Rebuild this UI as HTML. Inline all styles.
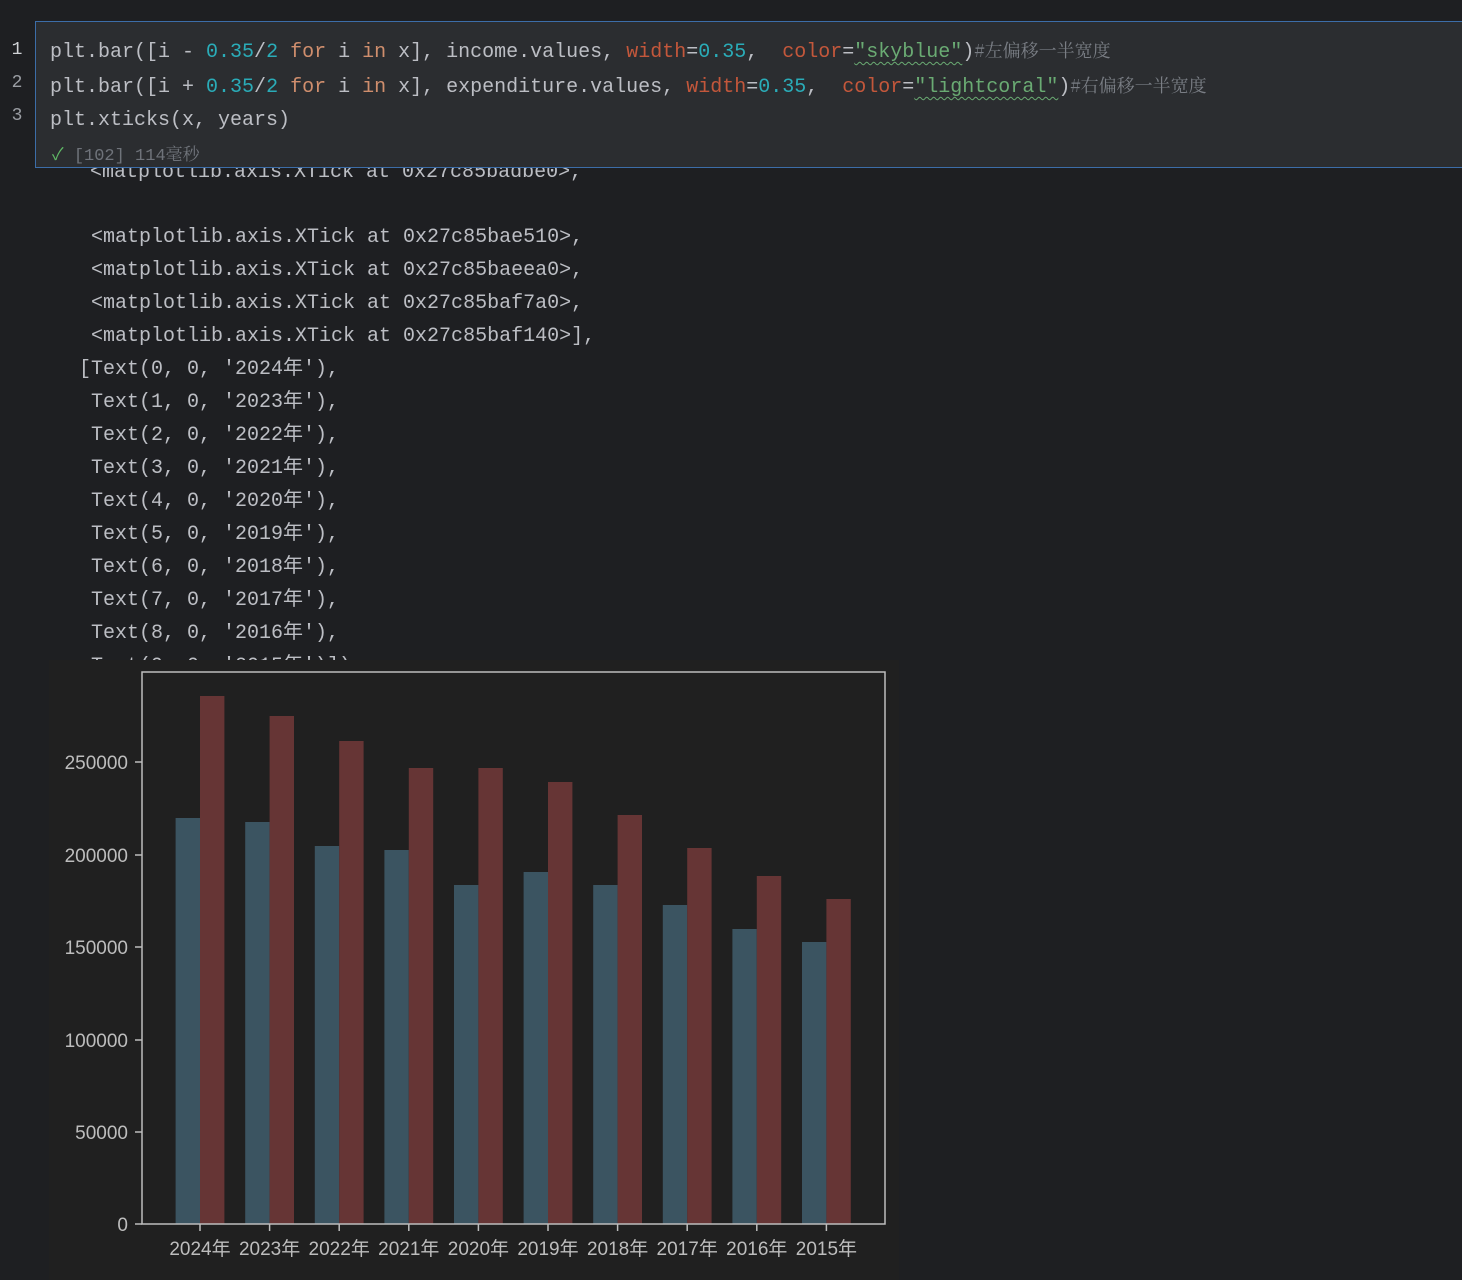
<!DOCTYPE html>
<html><head><meta charset="utf-8"><style>
body{margin:0;width:1462px;height:1280px;background:#1e1f22;overflow:hidden;font-family:"Liberation Mono","Noto Sans CJK SC",monospace;position:relative}
.cell{position:absolute;left:35px;top:21px;width:1427px;height:147px;background:#2b2d30;border:1px solid #3c6da8;border-right:none;box-sizing:border-box}
.ln{position:absolute;left:0;width:24px;text-align:center;font-size:18px;color:#9a9da3}
.code{position:absolute;left:50px;font-size:20px;color:#bcbec4;white-space:pre;line-height:33px}
.k{color:#cf8e6d}.n{color:#2aacb8}.p{color:#c3573b}.s{color:#6aab73;text-decoration:underline wavy #6aab73;text-decoration-thickness:1px;text-underline-offset:4px}.c{color:#7a7e85;font-family:"Noto Serif CJK SC",serif;font-size:18px}
.out{position:absolute;font-size:20px;color:#bcbec4;white-space:pre;line-height:33px}
</style></head><body>
<div class="out" style="left:90px;top:156px;clip-path:inset(12px 0 0 0)">&lt;matplotlib.axis.XTick at 0x27c85badbe0&gt;,</div>
<div class="out" style="left:79px;top:188px">
 &lt;matplotlib.axis.XTick at 0x27c85bae510&gt;,
 &lt;matplotlib.axis.XTick at 0x27c85baeea0&gt;,
 &lt;matplotlib.axis.XTick at 0x27c85baf7a0&gt;,
 &lt;matplotlib.axis.XTick at 0x27c85baf140&gt;],
[Text(0, 0, '2024年'),
 Text(1, 0, '2023年'),
 Text(2, 0, '2022年'),
 Text(3, 0, '2021年'),
 Text(4, 0, '2020年'),
 Text(5, 0, '2019年'),
 Text(6, 0, '2018年'),
 Text(7, 0, '2017年'),
 Text(8, 0, '2016年'),
 Text(9, 0, '2015年')])</div>
<div class="cell"></div>
<div class="ln" style="top:40px;left:5px;color:#d0d2d6">1</div>
<div class="ln" style="top:73px;left:5px">2</div>
<div class="ln" style="top:106px;left:5px">3</div>
<div class="code" style="top:34px">plt.bar([i - <span class="n">0.35</span>/<span class="n">2</span> <span class="k">for</span> i <span class="k">in</span> x], income.values, <span class="p">width</span>=<span class="n">0.35</span>,  <span class="p">color</span>=<span class="s">"skyblue"</span>)<span class="c">#左偏移一半宽度</span>
plt.bar([i + <span class="n">0.35</span>/<span class="n">2</span> <span class="k">for</span> i <span class="k">in</span> x], expenditure.values, <span class="p">width</span>=<span class="n">0.35</span>,  <span class="p">color</span>=<span class="s">"lightcoral"</span>)<span class="c">#右偏移一半宽度</span>
plt.xticks(x, years)</div>
<div style="position:absolute;left:52px;top:140px;font-size:17px;color:#6f737a;white-space:pre"><span style="color:#5fb865">✓</span> [102] 114<span style="font-family:'Noto Serif CJK SC',serif">毫秒</span></div>
<svg style="position:absolute;left:0;top:0" width="1462" height="1280">
<rect x="49" y="660" width="850" height="620" fill="#202020"/>
<g fill="#3b5461">
<rect x="175.6" y="818" width="24.4" height="406"/><rect x="245.2" y="822" width="24.4" height="402"/><rect x="314.8" y="846" width="24.4" height="378"/><rect x="384.4" y="850" width="24.4" height="374"/><rect x="454" y="885" width="24.4" height="339"/><rect x="523.6" y="872" width="24.4" height="352"/><rect x="593.2" y="885" width="24.4" height="339"/><rect x="662.8" y="905" width="24.4" height="319"/><rect x="732.4" y="929" width="24.4" height="295"/><rect x="802" y="942" width="24.4" height="282"/>
</g>
<g fill="#663535">
<rect x="200" y="696" width="24.4" height="528"/><rect x="269.6" y="716" width="24.4" height="508"/><rect x="339.2" y="741" width="24.4" height="483"/><rect x="408.8" y="768" width="24.4" height="456"/><rect x="478.4" y="768" width="24.4" height="456"/><rect x="548" y="782" width="24.4" height="442"/><rect x="617.6" y="815" width="24.4" height="409"/><rect x="687.2" y="848" width="24.4" height="376"/><rect x="756.8" y="876" width="24.4" height="348"/><rect x="826.4" y="899" width="24.4" height="325"/>
</g>
<rect x="142" y="672" width="743" height="552" fill="none" stroke="#bdbdbd" stroke-width="1.5"/>
<g stroke="#bdbdbd" stroke-width="1.5">
<line x1="135" y1="1224" x2="142" y2="1224"/><line x1="135" y1="1132" x2="142" y2="1132"/><line x1="135" y1="1040" x2="142" y2="1040"/><line x1="135" y1="947" x2="142" y2="947"/><line x1="135" y1="855" x2="142" y2="855"/><line x1="135" y1="762" x2="142" y2="762"/>
<line x1="200" y1="1224" x2="200" y2="1231"/><line x1="269.6" y1="1224" x2="269.6" y2="1231"/><line x1="339.2" y1="1224" x2="339.2" y2="1231"/><line x1="408.8" y1="1224" x2="408.8" y2="1231"/><line x1="478.4" y1="1224" x2="478.4" y2="1231"/><line x1="548" y1="1224" x2="548" y2="1231"/><line x1="617.6" y1="1224" x2="617.6" y2="1231"/><line x1="687.2" y1="1224" x2="687.2" y2="1231"/><line x1="756.8" y1="1224" x2="756.8" y2="1231"/><line x1="826.4" y1="1224" x2="826.4" y2="1231"/>
</g>
<g fill="#bdbdbd" font-family="'Liberation Sans','Noto Sans CJK SC',sans-serif" font-size="19" text-anchor="end">
<text x="128" y="1231">0</text><text x="128" y="1139">50000</text><text x="128" y="1047">100000</text><text x="128" y="954">150000</text><text x="128" y="862">200000</text><text x="128" y="769">250000</text>
</g>
<g fill="#bdbdbd" font-family="'Liberation Sans','Noto Sans CJK SC',sans-serif" font-size="19" text-anchor="middle">
<text x="200" y="1255">2024年</text><text x="269.6" y="1255">2023年</text><text x="339.2" y="1255">2022年</text><text x="408.8" y="1255">2021年</text><text x="478.4" y="1255">2020年</text><text x="548" y="1255">2019年</text><text x="617.6" y="1255">2018年</text><text x="687.2" y="1255">2017年</text><text x="756.8" y="1255">2016年</text><text x="826.4" y="1255">2015年</text>
</g>
</svg>
</body></html>
